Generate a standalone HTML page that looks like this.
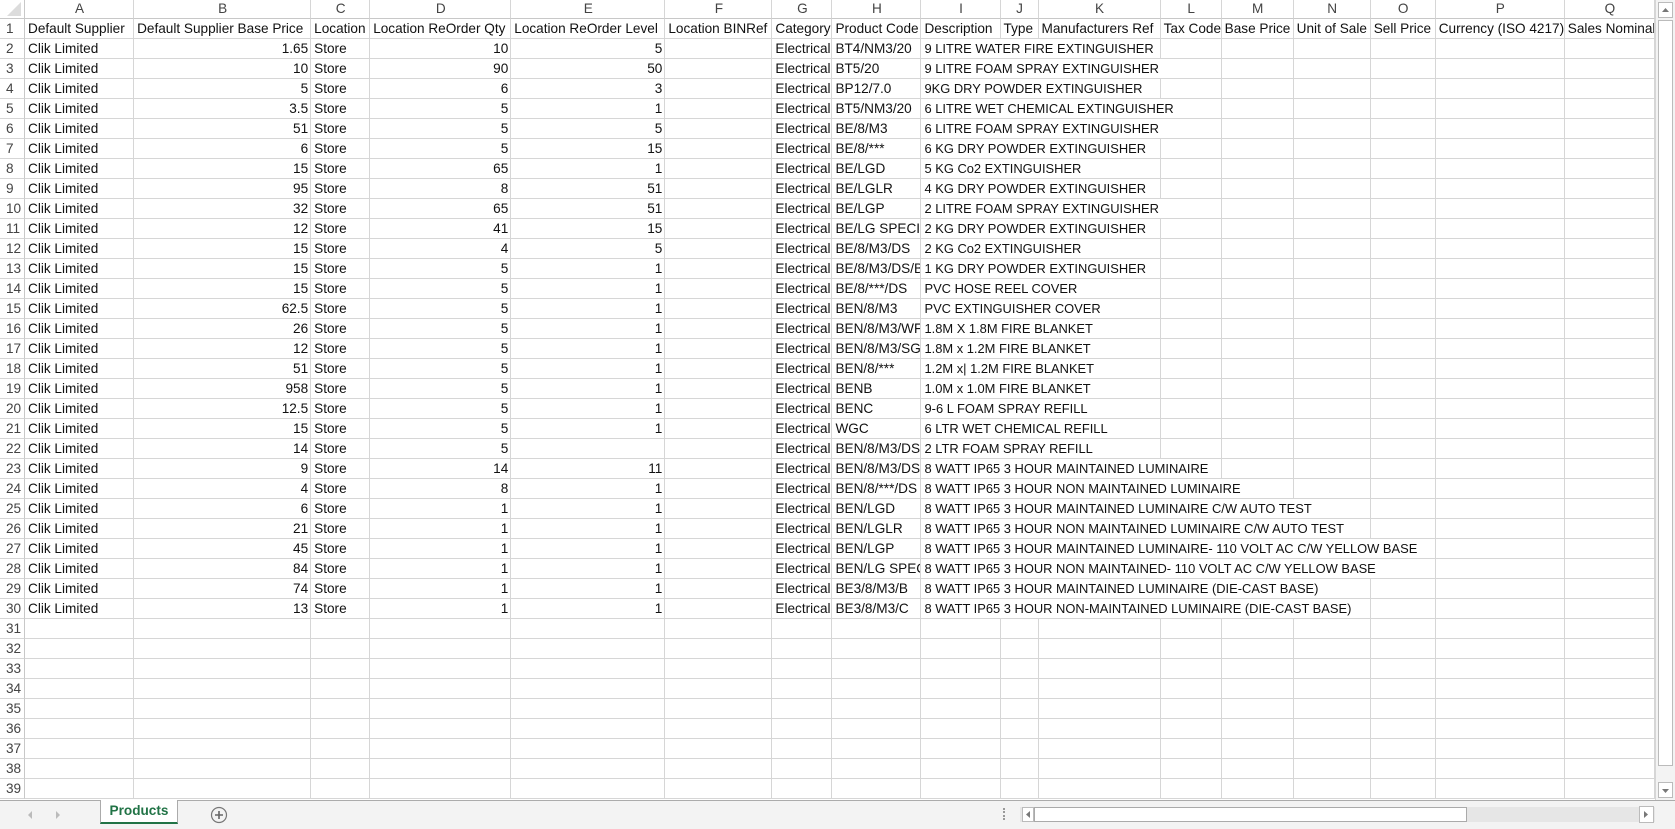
<!DOCTYPE html>
<html><head><meta charset="utf-8"><style>
*{box-sizing:border-box;margin:0;padding:0}
body{width:1675px;height:829px;overflow:hidden;background:#fff;font-family:"Liberation Sans",sans-serif;font-size:13.6px;color:#111;position:relative}
table{position:absolute;left:0;top:0;border-collapse:separate;border-spacing:0;table-layout:fixed;width:1655px}
td{height:20px;border-right:1px solid #d6d6d6;border-bottom:1px solid #d6d6d6;white-space:nowrap;overflow:hidden;padding:0 2px 0 3px;line-height:19px;position:relative}
tr.h td{height:19px;text-align:center;color:#444;line-height:18px;border-bottom:1px solid #c8c8c8}
td.rh{text-align:left;color:#444;padding-left:6px;border-right:1px solid #c8c8c8}
.r{text-align:right}
td.d{overflow:visible}
td.d span{position:absolute;left:0;top:0;height:19px;padding:0 4px 0 3px;background:#fff;z-index:2;font-size:12.9px}
.vs{position:absolute;left:1655px;top:0;width:20px;height:800px;background:#f3f3f3;border-left:1px solid #d6d6d6}
.tabs{position:absolute;left:0;top:800px;width:1675px;height:29px;background:#f3f3f3;border-top:1px solid #ababab}
</style></head><body>
<table>
<colgroup><col style="width:25px"><col style="width:109px"><col style="width:177px"><col style="width:59px"><col style="width:141px"><col style="width:154px"><col style="width:107px"><col style="width:60px"><col style="width:89px"><col style="width:79px"><col style="width:38px"><col style="width:122px"><col style="width:61px"><col style="width:72px"><col style="width:77px"><col style="width:65px"><col style="width:129px"><col style="width:90px"></colgroup>
<tr class="h"><td style="border-right:1px solid #c8c8c8"><svg width="14" height="14" style="position:absolute;right:3px;bottom:2px"><polygon points="14,0 14,14 0,14" fill="#dcdcdc"/></svg></td><td>A</td><td>B</td><td>C</td><td>D</td><td>E</td><td>F</td><td>G</td><td>H</td><td>I</td><td>J</td><td>K</td><td>L</td><td>M</td><td>N</td><td>O</td><td>P</td><td>Q</td></tr>
<tr><td class="rh">1</td><td>Default Supplier</td><td>Default Supplier Base Price</td><td>Location</td><td>Location ReOrder Qty</td><td>Location ReOrder Level</td><td>Location BINRef</td><td>Category</td><td>Product Code</td><td>Description</td><td>Type</td><td>Manufacturers Ref</td><td>Tax Code</td><td>Base Price</td><td>Unit of Sale</td><td>Sell Price</td><td>Currency (ISO 4217)</td><td>Sales Nominal</td></tr>
<tr><td class="rh">2</td><td>Clik Limited</td><td class="r">1.65</td><td>Store</td><td class="r">10</td><td class="r">5</td><td></td><td>Electrical</td><td>BT4/NM3/20</td><td class="d"><span>9 LITRE WATER FIRE EXTINGUISHER</span></td><td></td><td></td><td></td><td></td><td></td><td></td><td></td><td></td></tr>
<tr><td class="rh">3</td><td>Clik Limited</td><td class="r">10</td><td>Store</td><td class="r">90</td><td class="r">50</td><td></td><td>Electrical</td><td>BT5/20</td><td class="d"><span>9 LITRE FOAM SPRAY EXTINGUISHER</span></td><td></td><td></td><td></td><td></td><td></td><td></td><td></td><td></td></tr>
<tr><td class="rh">4</td><td>Clik Limited</td><td class="r">5</td><td>Store</td><td class="r">6</td><td class="r">3</td><td></td><td>Electrical</td><td>BP12/7.0</td><td class="d"><span>9KG DRY POWDER EXTINGUISHER</span></td><td></td><td></td><td></td><td></td><td></td><td></td><td></td><td></td></tr>
<tr><td class="rh">5</td><td>Clik Limited</td><td class="r">3.5</td><td>Store</td><td class="r">5</td><td class="r">1</td><td></td><td>Electrical</td><td>BT5/NM3/20</td><td class="d"><span>6 LITRE WET CHEMICAL EXTINGUISHER</span></td><td></td><td></td><td></td><td></td><td></td><td></td><td></td><td></td></tr>
<tr><td class="rh">6</td><td>Clik Limited</td><td class="r">51</td><td>Store</td><td class="r">5</td><td class="r">5</td><td></td><td>Electrical</td><td>BE/8/M3</td><td class="d"><span>6 LITRE FOAM SPRAY EXTINGUISHER</span></td><td></td><td></td><td></td><td></td><td></td><td></td><td></td><td></td></tr>
<tr><td class="rh">7</td><td>Clik Limited</td><td class="r">6</td><td>Store</td><td class="r">5</td><td class="r">15</td><td></td><td>Electrical</td><td>BE/8/***</td><td class="d"><span>6 KG DRY POWDER EXTINGUISHER</span></td><td></td><td></td><td></td><td></td><td></td><td></td><td></td><td></td></tr>
<tr><td class="rh">8</td><td>Clik Limited</td><td class="r">15</td><td>Store</td><td class="r">65</td><td class="r">1</td><td></td><td>Electrical</td><td>BE/LGD</td><td class="d"><span>5 KG Co2 EXTINGUISHER</span></td><td></td><td></td><td></td><td></td><td></td><td></td><td></td><td></td></tr>
<tr><td class="rh">9</td><td>Clik Limited</td><td class="r">95</td><td>Store</td><td class="r">8</td><td class="r">51</td><td></td><td>Electrical</td><td>BE/LGLR</td><td class="d"><span>4 KG DRY POWDER EXTINGUISHER</span></td><td></td><td></td><td></td><td></td><td></td><td></td><td></td><td></td></tr>
<tr><td class="rh">10</td><td>Clik Limited</td><td class="r">32</td><td>Store</td><td class="r">65</td><td class="r">51</td><td></td><td>Electrical</td><td>BE/LGP</td><td class="d"><span>2 LITRE FOAM SPRAY EXTINGUISHER</span></td><td></td><td></td><td></td><td></td><td></td><td></td><td></td><td></td></tr>
<tr><td class="rh">11</td><td>Clik Limited</td><td class="r">12</td><td>Store</td><td class="r">41</td><td class="r">15</td><td></td><td>Electrical</td><td>BE/LG SPECIAL</td><td class="d"><span>2 KG DRY POWDER EXTINGUISHER</span></td><td></td><td></td><td></td><td></td><td></td><td></td><td></td><td></td></tr>
<tr><td class="rh">12</td><td>Clik Limited</td><td class="r">15</td><td>Store</td><td class="r">4</td><td class="r">5</td><td></td><td>Electrical</td><td>BE/8/M3/DS</td><td class="d"><span>2 KG Co2 EXTINGUISHER</span></td><td></td><td></td><td></td><td></td><td></td><td></td><td></td><td></td></tr>
<tr><td class="rh">13</td><td>Clik Limited</td><td class="r">15</td><td>Store</td><td class="r">5</td><td class="r">1</td><td></td><td>Electrical</td><td>BE/8/M3/DS/BW</td><td class="d"><span>1 KG DRY POWDER EXTINGUISHER</span></td><td></td><td></td><td></td><td></td><td></td><td></td><td></td><td></td></tr>
<tr><td class="rh">14</td><td>Clik Limited</td><td class="r">15</td><td>Store</td><td class="r">5</td><td class="r">1</td><td></td><td>Electrical</td><td>BE/8/***/DS</td><td class="d"><span>PVC HOSE REEL COVER</span></td><td></td><td></td><td></td><td></td><td></td><td></td><td></td><td></td></tr>
<tr><td class="rh">15</td><td>Clik Limited</td><td class="r">62.5</td><td>Store</td><td class="r">5</td><td class="r">1</td><td></td><td>Electrical</td><td>BEN/8/M3</td><td class="d"><span>PVC EXTINGUISHER COVER</span></td><td></td><td></td><td></td><td></td><td></td><td></td><td></td><td></td></tr>
<tr><td class="rh">16</td><td>Clik Limited</td><td class="r">26</td><td>Store</td><td class="r">5</td><td class="r">1</td><td></td><td>Electrical</td><td>BEN/8/M3/WF</td><td class="d"><span>1.8M X 1.8M FIRE BLANKET</span></td><td></td><td></td><td></td><td></td><td></td><td></td><td></td><td></td></tr>
<tr><td class="rh">17</td><td>Clik Limited</td><td class="r">12</td><td>Store</td><td class="r">5</td><td class="r">1</td><td></td><td>Electrical</td><td>BEN/8/M3/SG</td><td class="d"><span>1.8M x 1.2M FIRE BLANKET</span></td><td></td><td></td><td></td><td></td><td></td><td></td><td></td><td></td></tr>
<tr><td class="rh">18</td><td>Clik Limited</td><td class="r">51</td><td>Store</td><td class="r">5</td><td class="r">1</td><td></td><td>Electrical</td><td>BEN/8/***</td><td class="d"><span>1.2M x| 1.2M FIRE BLANKET</span></td><td></td><td></td><td></td><td></td><td></td><td></td><td></td><td></td></tr>
<tr><td class="rh">19</td><td>Clik Limited</td><td class="r">958</td><td>Store</td><td class="r">5</td><td class="r">1</td><td></td><td>Electrical</td><td>BENB</td><td class="d"><span>1.0M x 1.0M FIRE BLANKET</span></td><td></td><td></td><td></td><td></td><td></td><td></td><td></td><td></td></tr>
<tr><td class="rh">20</td><td>Clik Limited</td><td class="r">12.5</td><td>Store</td><td class="r">5</td><td class="r">1</td><td></td><td>Electrical</td><td>BENC</td><td class="d"><span>9-6 L FOAM SPRAY REFILL</span></td><td></td><td></td><td></td><td></td><td></td><td></td><td></td><td></td></tr>
<tr><td class="rh">21</td><td>Clik Limited</td><td class="r">15</td><td>Store</td><td class="r">5</td><td class="r">1</td><td></td><td>Electrical</td><td>WGC</td><td class="d"><span>6 LTR WET CHEMICAL REFILL</span></td><td></td><td></td><td></td><td></td><td></td><td></td><td></td><td></td></tr>
<tr><td class="rh">22</td><td>Clik Limited</td><td class="r">14</td><td>Store</td><td class="r">5</td><td class="r"></td><td></td><td>Electrical</td><td>BEN/8/M3/DS</td><td class="d"><span>2 LTR FOAM SPRAY REFILL</span></td><td></td><td></td><td></td><td></td><td></td><td></td><td></td><td></td></tr>
<tr><td class="rh">23</td><td>Clik Limited</td><td class="r">9</td><td>Store</td><td class="r">14</td><td class="r">11</td><td></td><td>Electrical</td><td>BEN/8/M3/DS,W</td><td class="d"><span>8 WATT IP65 3 HOUR MAINTAINED LUMINAIRE</span></td><td></td><td></td><td></td><td></td><td></td><td></td><td></td><td></td></tr>
<tr><td class="rh">24</td><td>Clik Limited</td><td class="r">4</td><td>Store</td><td class="r">8</td><td class="r">1</td><td></td><td>Electrical</td><td>BEN/8/***/DS</td><td class="d"><span>8 WATT IP65 3 HOUR NON MAINTAINED LUMINAIRE</span></td><td></td><td></td><td></td><td></td><td></td><td></td><td></td><td></td></tr>
<tr><td class="rh">25</td><td>Clik Limited</td><td class="r">6</td><td>Store</td><td class="r">1</td><td class="r">1</td><td></td><td>Electrical</td><td>BEN/LGD</td><td class="d"><span>8 WATT IP65 3 HOUR MAINTAINED LUMINAIRE C/W AUTO TEST</span></td><td></td><td></td><td></td><td></td><td></td><td></td><td></td><td></td></tr>
<tr><td class="rh">26</td><td>Clik Limited</td><td class="r">21</td><td>Store</td><td class="r">1</td><td class="r">1</td><td></td><td>Electrical</td><td>BEN/LGLR</td><td class="d"><span>8 WATT IP65 3 HOUR NON MAINTAINED LUMINAIRE C/W AUTO TEST</span></td><td></td><td></td><td></td><td></td><td></td><td></td><td></td><td></td></tr>
<tr><td class="rh">27</td><td>Clik Limited</td><td class="r">45</td><td>Store</td><td class="r">1</td><td class="r">1</td><td></td><td>Electrical</td><td>BEN/LGP</td><td class="d"><span>8 WATT IP65 3 HOUR MAINTAINED LUMINAIRE- 110 VOLT AC C/W YELLOW BASE</span></td><td></td><td></td><td></td><td></td><td></td><td></td><td></td><td></td></tr>
<tr><td class="rh">28</td><td>Clik Limited</td><td class="r">84</td><td>Store</td><td class="r">1</td><td class="r">1</td><td></td><td>Electrical</td><td>BEN/LG SPECIAL</td><td class="d"><span>8 WATT IP65 3 HOUR NON MAINTAINED- 110 VOLT AC C/W YELLOW BASE</span></td><td></td><td></td><td></td><td></td><td></td><td></td><td></td><td></td></tr>
<tr><td class="rh">29</td><td>Clik Limited</td><td class="r">74</td><td>Store</td><td class="r">1</td><td class="r">1</td><td></td><td>Electrical</td><td>BE3/8/M3/B</td><td class="d"><span>8 WATT IP65 3 HOUR MAINTAINED LUMINAIRE (DIE-CAST BASE)</span></td><td></td><td></td><td></td><td></td><td></td><td></td><td></td><td></td></tr>
<tr><td class="rh">30</td><td>Clik Limited</td><td class="r">13</td><td>Store</td><td class="r">1</td><td class="r">1</td><td></td><td>Electrical</td><td>BE3/8/M3/C</td><td class="d"><span>8 WATT IP65 3 HOUR NON-MAINTAINED LUMINAIRE (DIE-CAST BASE)</span></td><td></td><td></td><td></td><td></td><td></td><td></td><td></td><td></td></tr>
<tr><td class="rh">31</td><td></td><td></td><td></td><td></td><td></td><td></td><td></td><td></td><td></td><td></td><td></td><td></td><td></td><td></td><td></td><td></td><td></td></tr>
<tr><td class="rh">32</td><td></td><td></td><td></td><td></td><td></td><td></td><td></td><td></td><td></td><td></td><td></td><td></td><td></td><td></td><td></td><td></td><td></td></tr>
<tr><td class="rh">33</td><td></td><td></td><td></td><td></td><td></td><td></td><td></td><td></td><td></td><td></td><td></td><td></td><td></td><td></td><td></td><td></td><td></td></tr>
<tr><td class="rh">34</td><td></td><td></td><td></td><td></td><td></td><td></td><td></td><td></td><td></td><td></td><td></td><td></td><td></td><td></td><td></td><td></td><td></td></tr>
<tr><td class="rh">35</td><td></td><td></td><td></td><td></td><td></td><td></td><td></td><td></td><td></td><td></td><td></td><td></td><td></td><td></td><td></td><td></td><td></td></tr>
<tr><td class="rh">36</td><td></td><td></td><td></td><td></td><td></td><td></td><td></td><td></td><td></td><td></td><td></td><td></td><td></td><td></td><td></td><td></td><td></td></tr>
<tr><td class="rh">37</td><td></td><td></td><td></td><td></td><td></td><td></td><td></td><td></td><td></td><td></td><td></td><td></td><td></td><td></td><td></td><td></td><td></td></tr>
<tr><td class="rh">38</td><td></td><td></td><td></td><td></td><td></td><td></td><td></td><td></td><td></td><td></td><td></td><td></td><td></td><td></td><td></td><td></td><td></td></tr>
<tr><td class="rh">39</td><td></td><td></td><td></td><td></td><td></td><td></td><td></td><td></td><td></td><td></td><td></td><td></td><td></td><td></td><td></td><td></td><td></td></tr>
</table>
<div class="vs">
 <div style="position:absolute;left:2px;top:2px;width:15px;height:16px;border:1px solid #bbb;background:#fff"><svg width="13" height="14"><polygon points="3,9 10,9 6.5,5" fill="#777"/></svg></div>
 <div style="position:absolute;left:2px;top:20px;width:15px;height:746px;border:1px solid #bbb;background:#fff"></div>
 <div style="position:absolute;left:2px;top:782px;width:15px;height:16px;border:1px solid #bbb;background:#fff"><svg width="13" height="14"><polygon points="3,6 10,6 6.5,10" fill="#777"/></svg></div>
</div>
<div class="tabs">
 <svg width="10" height="12" style="position:absolute;left:25px;top:8px"><polygon points="7,2 7,10 3,6" fill="#bbb"/></svg>
 <svg width="10" height="12" style="position:absolute;left:53px;top:8px"><polygon points="3,2 3,10 7,6" fill="#bbb"/></svg>
 <div style="position:absolute;left:100px;top:-1px;width:78px;height:24px;background:#fff;border:1px solid #ababab;border-top:none;border-bottom:2px solid #217346;color:#217346;font-weight:bold;font-size:13.6px;text-align:center;line-height:22px">Products</div>
 <svg width="18" height="18" style="position:absolute;left:210px;top:5px"><circle cx="9" cy="9" r="7.5" fill="none" stroke="#777" stroke-width="1.2"/><path d="M9 5v8M5 9h8" stroke="#666" stroke-width="1.6"/></svg>
 <div style="position:absolute;left:1003px;top:7px;width:2px;height:12px;border-left:2px dotted #999"></div>
 <div style="position:absolute;left:1020px;top:6px;width:635px;height:15px;background:#e6e6e6"></div>
 <div style="position:absolute;left:1022px;top:6px;width:12px;height:15px;border:1px solid #bbb;background:#fff"><svg width="10" height="13"><polygon points="7,3 7,10 3,6.5" fill="#777"/></svg></div>
 <div style="position:absolute;left:1034px;top:6px;width:433px;height:15px;border:1px solid #aaa;background:#fff"></div>
 <div style="position:absolute;left:1639px;top:5px;width:15px;height:17px;border:1px solid #bbb;background:#fff"><svg width="13" height="15"><polygon points="4,4 4,11 8,7.5" fill="#777"/></svg></div>
</div>
</body></html>
